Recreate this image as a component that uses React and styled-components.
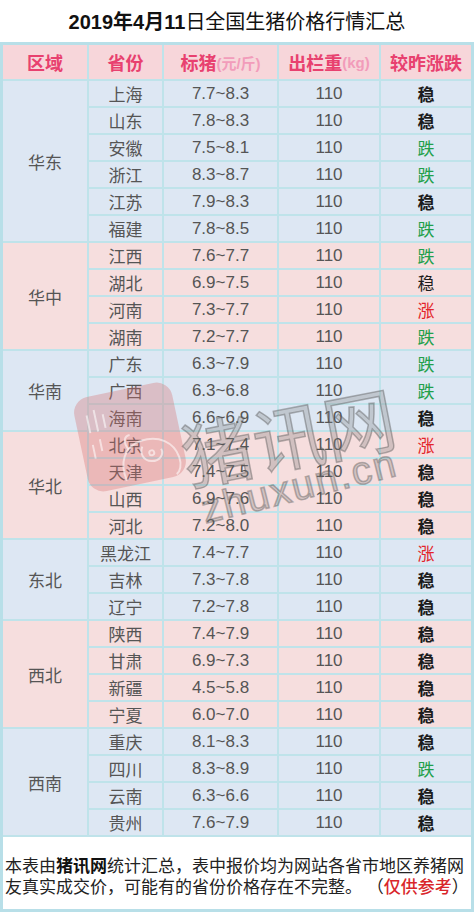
import React from "react";
import styled, { createGlobalStyle } from "styled-components";

const GlobalStyle = createGlobalStyle`
  html, body {
    margin: 0;
    padding: 0;
    background: #fff;
  }
  body {
    font-family: "Liberation Sans", "Noto Sans CJK SC", sans-serif;
  }
`;

const FONT = `"Liberation Sans", "Noto Sans CJK SC", sans-serif`;

const Page = styled.div`
  width: 474px;
  height: 914px;
  position: relative;
  overflow: hidden;
  font-family: ${FONT};
`;

const Title = styled.h1`
  margin: 0;
  height: 42px;
  display: flex;
  align-items: center;
  justify-content: center;
  font-size: 20px;
  font-weight: normal;
  color: #111;
  padding-bottom: 2px;
  box-sizing: border-box;
  b {
    font-weight: bold;
  }
`;

const Frame = styled.div`
  border: 3px solid #b8dfe8;
  background: #fff;
`;

const Grid = styled.div`
  display: grid;
  grid-template-columns: 84px 73px 113px 100px 90px;
  grid-template-rows: 34px;
  grid-auto-rows: 25px;
  gap: 2px;
  background: #bfe3ea;
`;

const HeadCell = styled.div`
  background: #f7d6da;
  color: #e8416f;
  font-weight: bold;
  font-size: 18px;
  display: flex;
  align-items: center;
  justify-content: center;
  white-space: nowrap;
`;

const Unit = styled.span`
  color: #f29cba;
  font-size: 15px;
`;

const Cell = styled.div`
  background: ${(p) => (p.$pink ? "#f6dede" : "#dde7f3")};
  color: #555;
  font-size: 17px;
  display: flex;
  align-items: center;
  justify-content: center;
  white-space: nowrap;
`;

const RegionCell = styled(Cell)`
  grid-row: span ${(p) => p.$span};
`;

const COLORS = { 稳: "#1c1c1c", 跌: "#22a04b", 涨: "#e3252b" };

const Trend = styled(Cell)`
  color: ${(p) => COLORS[p.$t]};
  font-weight: ${(p) => (p.$t === "稳" && !p.$thin ? "bold" : "normal")};
`;

const Footer = styled.div`
  border-top: 2px solid #bfe3ea;
  height: 74px;
  box-sizing: border-box;
  padding: 19px 2px 0 2px;
  font-size: 17px;
  line-height: 21px;
  color: #222;
  b {
    font-weight: bold;
    color: #111;
  }
`;

const Red = styled.span`
  color: #d9262b;
  font-weight: 500;
`;

const Watermark = styled.div`
  position: absolute;
  left: 0;
  top: 0;
  width: 474px;
  height: 914px;
  pointer-events: none;
`;

const Logo = styled.svg`
  position: absolute;
  left: 78px;
  top: 387px;
  transform: rotate(-12deg);
`;

const MarkText = styled.div`
  position: absolute;
  left: ${(p) => p.$x}px;
  top: ${(p) => p.$y}px;
  transform: rotate(${(p) => p.$r}deg);
  transform-origin: left center;
  white-space: nowrap;
  font-family: ${FONT};
  font-size: ${(p) => p.$size}px;
  letter-spacing: ${(p) => p.$ls || 0}px;
  color: rgba(130, 130, 130, 0.32);
  -webkit-text-stroke: 1.5px rgba(80, 80, 80, 0.4);
`;

const groups = [
  {
    name: "华东",
    rows: [
      ["上海", "7.7~8.3", "稳"],
      ["山东", "7.8~8.3", "稳"],
      ["安徽", "7.5~8.1", "跌"],
      ["浙江", "8.3~8.7", "跌"],
      ["江苏", "7.9~8.3", "稳"],
      ["福建", "7.8~8.5", "跌"],
    ],
  },
  {
    name: "华中",
    rows: [
      ["江西", "7.6~7.7", "跌"],
      ["湖北", "6.9~7.5", "稳", true],
      ["河南", "7.3~7.7", "涨"],
      ["湖南", "7.2~7.7", "跌"],
    ],
  },
  {
    name: "华南",
    rows: [
      ["广东", "6.3~7.9", "跌"],
      ["广西", "6.3~6.8", "跌"],
      ["海南", "6.6~6.9", "稳"],
    ],
  },
  {
    name: "华北",
    rows: [
      ["北京", "7.1~7.4", "涨"],
      ["天津", "7.4~7.5", "稳"],
      ["山西", "6.9~7.6", "稳"],
      ["河北", "7.2~8.0", "稳"],
    ],
  },
  {
    name: "东北",
    rows: [
      ["黑龙江", "7.4~7.7", "涨"],
      ["吉林", "7.3~7.8", "稳"],
      ["辽宁", "7.2~7.8", "稳"],
    ],
  },
  {
    name: "西北",
    rows: [
      ["陕西", "7.4~7.9", "稳"],
      ["甘肃", "6.9~7.3", "稳"],
      ["新疆", "4.5~5.8", "稳"],
      ["宁夏", "6.0~7.0", "稳"],
    ],
  },
  {
    name: "西南",
    rows: [
      ["重庆", "8.1~8.3", "稳"],
      ["四川", "8.3~8.9", "跌"],
      ["云南", "6.3~6.6", "稳"],
      ["贵州", "7.6~7.9", "稳"],
    ],
  },
];

export default function App() {
  return (
    <Page>
      <GlobalStyle />
      <Title>
        <b>2019年4月11</b>日全国生猪价格行情汇总
      </Title>
      <Frame>
        <Grid>
          <HeadCell>区域</HeadCell>
          <HeadCell>省份</HeadCell>
          <HeadCell>
            标猪<Unit>(元/斤)</Unit>
          </HeadCell>
          <HeadCell>
            出栏重<Unit>(kg)</Unit>
          </HeadCell>
          <HeadCell>较昨涨跌</HeadCell>
          {groups.map((g, gi) => {
            const pink = gi % 2 === 1;
            return (
              <React.Fragment key={g.name}>
                <RegionCell $pink={pink} $span={g.rows.length}>
                  {g.name}
                </RegionCell>
                {g.rows.map(([prov, price, t, thin]) => (
                  <React.Fragment key={prov}>
                    <Cell $pink={pink}>{prov}</Cell>
                    <Cell $pink={pink}>{price}</Cell>
                    <Cell $pink={pink}>110</Cell>
                    <Trend $pink={pink} $t={t} $thin={thin}>
                      {t}
                    </Trend>
                  </React.Fragment>
                ))}
              </React.Fragment>
            );
          })}
        </Grid>
        <Footer>
          本表由<b>猪讯网</b>统计汇总，表中报价均为网站各省市地区养猪网友真实成交价，可能有的省份价格存在不完整。
          （<Red>仅供参考</Red>）
        </Footer>
      </Frame>
      <Watermark>
        <Logo width="104" height="100" viewBox="0 0 104 100">
          <rect x="2" y="2" width="100" height="96" rx="16" fill="rgba(214,110,110,0.34)" />
          <g stroke="rgba(255,255,255,0.55)" strokeWidth="2" fill="none">
            <path d="M14 20 v18 M22 16 v22 M30 22 v14 M14 50 v14 M22 46 v12" />
            <path d="M40 92 C36 74 44 58 62 56 C80 54 94 64 96 80 C97 88 94 94 90 96" />
            <path d="M62 62 C58 68 60 76 68 78 C76 80 82 74 80 68" />
            <circle cx="70" cy="70" r="2.5" />
            <path d="M48 62 C44 54 46 48 52 48" />
          </g>
        </Logo>
        <MarkText $x={182} $y={402} $r={-11} $size={72}>
          猪讯网
        </MarkText>
        <MarkText $x={202} $y={488} $r={-14} $size={40} $ls={2}>
          zhuxun.cn
        </MarkText>
      </Watermark>
    </Page>
  );
}
